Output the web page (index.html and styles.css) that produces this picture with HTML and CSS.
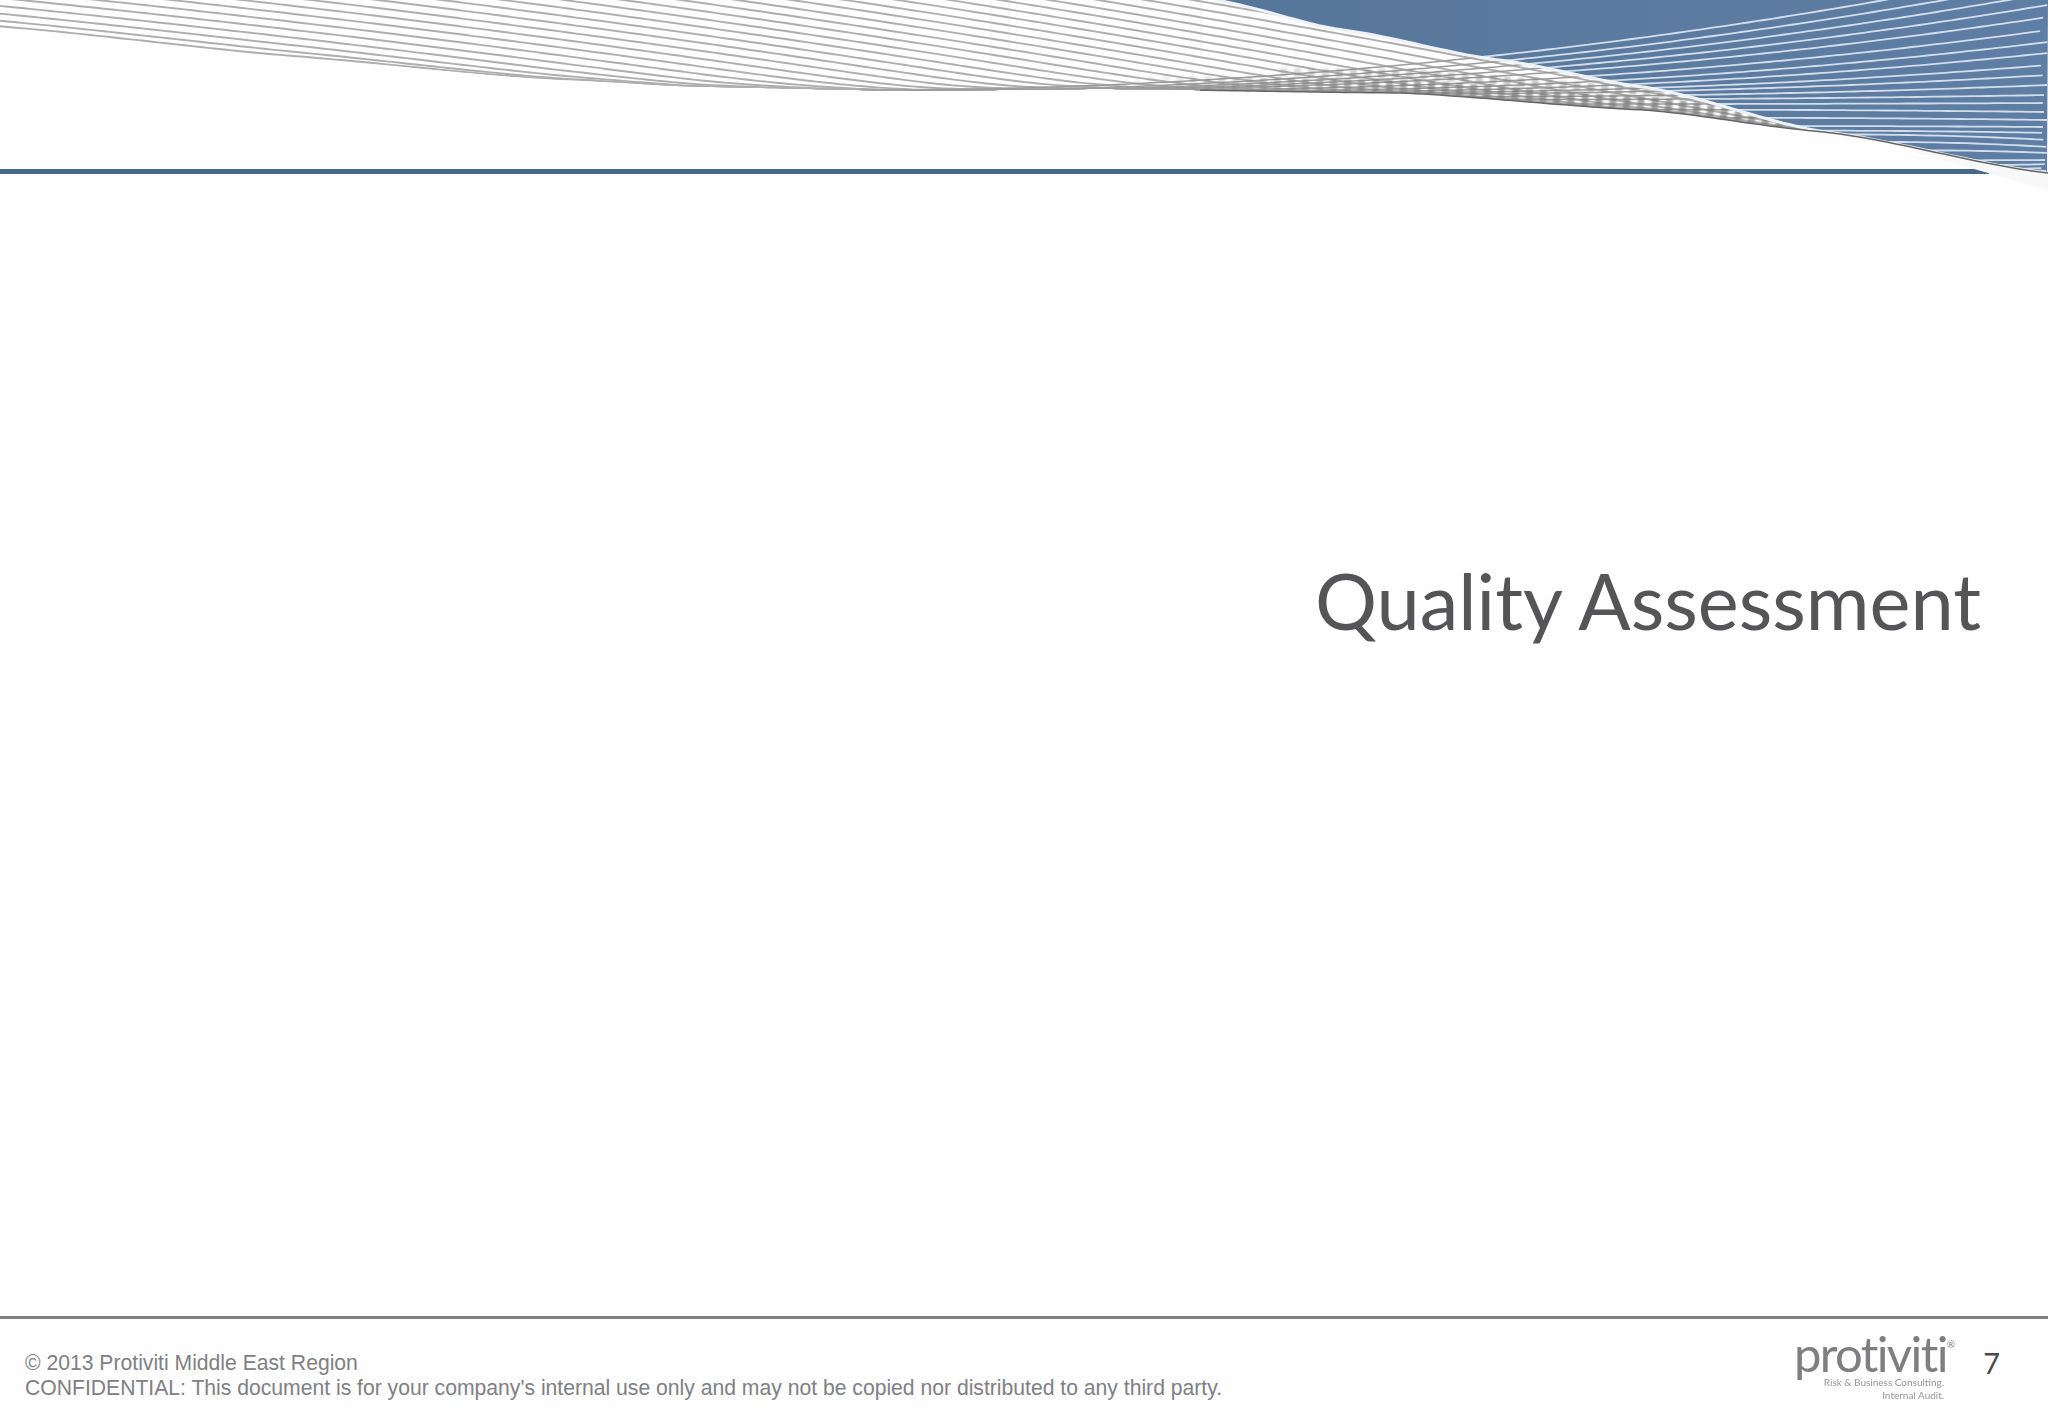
FILE: index.html
```html
<!DOCTYPE html>
<html lang="en">
<head>
    <meta charset="UTF-8" />
    <title>Quality Assessment</title>
    <link rel="stylesheet" href="styles.css">
</head>
<body>
    <div class="slide">
        <!-- wave artwork, lines are added by banner.js -->
        <svg class="banner" id="banner" width="2048" height="190" viewBox="0 0 2048 190" aria-hidden="true"></svg>

        <header class="top"><div class="top-rule"></div></header>

        <main class="content">
            <h1 class="title">Quality Assessment</h1>
        </main>

        <footer class="footer">
            <div class="legal">
                <div>© 2013 Protiviti Middle East Region</div>
                <div>CONFIDENTIAL: This document is for your company's internal use only and may not be copied nor distributed to any third party.</div>
            </div>
            <div class="brand">
                <div class="logo">
                    <div class="logo-name">protiviti<span class="logo-mark">®</span></div>
                    <div class="logo-tag">Risk &amp; Business Consulting.</div>
                    <div class="logo-tag">Internal Audit.</div>
                </div>
                <div class="page-number">7</div>
            </div>
        </footer>
    </div>
    <script src="banner.js"></script>
</body>
</html>
```

FILE: styles.css
```css
html, body {
    margin: 0;
    padding: 0;
    overflow: hidden;
    background: #fefefe;
}

.slide {
    position: relative;
    width: 2048px;
    height: 1418px;
    display: flex;
    flex-direction: column;
    font-family: "Liberation Sans", Arial, sans-serif;
}

/* Wave lies over the top of the slide */
.banner {
    position: absolute;
    top: 0;
    left: 0;
    display: block;
}

.top {
    height: 174px;
    display: flex;
    align-items: flex-end;
}

.top-rule {
    width: 1989px;
    height: 5px;
    background: #46698a;
}

.content {
    flex: 1;
    display: flex;
    justify-content: flex-end;
    padding: 382px 67px 0 0;
}

.title {
    margin: 0;
    font-family: Lato, sans-serif;
    font-weight: 400;
    font-size: 77.5px;
    line-height: 90px;
    color: #555558;
    white-space: nowrap;
    font-variant-ligatures: none;
}

.footer {
    height: 99px;
    border-top: 3px solid #808080;
    display: flex;
    justify-content: space-between;
    padding: 0 48px 0 25px;
}

.legal {
    padding-top: 31px;
    font-size: 21.15px;
    line-height: 25px;
    color: #808084;
}

.brand {
    display: flex;
    gap: 28px;
}

.logo {
    padding-top: 11px;
    text-align: right;
    color: #7f7f82;
}

.logo-name {
    font-family: Lato, sans-serif;
    font-size: 49px;
    line-height: 46px;
    letter-spacing: -1.6px;
    white-space: nowrap;
    font-variant-ligatures: none;
}

.logo-mark {
    font-size: 10px;
    line-height: 0;
    letter-spacing: 0;
    vertical-align: 24px;
}

.logo-tag {
    padding-right: 11px;
    font-family: Lato, sans-serif;
    font-size: 10px;
    line-height: 13px;
    color: #96969a;
    filter: blur(0.4px);
}

.page-number {
    padding-top: 26px;
    font-family: Lato, sans-serif;
    font-size: 29px;
    line-height: 36px;
    color: #4a4a4e;
}
```

FILE: banner.js
```js
// Draws the two line families of the header wave
const svg = document.getElementById("banner");
const NS = "http://www.w3.org/2000/svg";

// lower edge of the wave, read off the reference
const lowerEdge = [[0, 31], [280, 58], [561, 80], [701, 87], [912, 91], [1100, 89], [1402, 93], [1644, 110], [1825, 132], [2048, 173]];
// edge between the grey lines and the blue area
const upperEdge = [[1215, 0], [1342, 30], [1499, 60], [1644, 87], [1825, 132], [2048, 173]];
// where the rising lines meet the right side of the slide
const fanEnds = [-31, -19, -7, 5, 17, 30, 42, 53, 65, 75, 85, 95, 103, 112, 120, 127, 133, 140, 147, 153, 160, 164, 168, 171];
// where each of them leaves the lower edge, by its end value
const fanStarts = [[-31, 860], [95, 1500], [133, 1810], [171, 2030]];

function interp(points, x) {
    for (let i = 1; i < points.length; i++) {
        if (x <= points[i][0]) {
            const [x0, y0] = points[i - 1];
            const [x1, y1] = points[i];
            const t = (x - x0) / (x1 - x0);
            return y0 + (y1 - y0) * (t * t * (3 - 2 * t) * 0.35 + t * 0.65);
        }
    }
    return points[points.length - 1][1];
}

function softMin(a, b, t) {
    const m = Math.min(a, b);
    return m - t * Math.log(Math.exp((m - a) / t) + Math.exp((m - b) / t));
}

function el(name, attrs, parent) {
    const node = document.createElementNS(NS, name);
    for (const key in attrs) node.setAttribute(key, attrs[key]);
    (parent || svg).appendChild(node);
    return node;
}

function toPath(points) {
    return "M" + points.map(p => p[0].toFixed(1) + " " + p[1].toFixed(1)).join("L");
}

function sample(fn, from, to, step) {
    const out = [];
    for (let x = from; x <= to; x += step) out.push([x, fn(x)]);
    return out;
}

const lowerLine = sample(x => interp(lowerEdge, x), 0, 2048, 8);
const upperLine = sample(x => interp(upperEdge, x), 1215, 2048, 8);

const defs = el("defs", {});
const blueClip = el("clipPath", { id: "blue-clip" }, defs);
el("path", { d: toPath(upperLine) + "L2048 0Z" }, blueClip);
const waveClip = el("clipPath", { id: "wave-clip" }, defs);
el("path", { d: "M0 0L1215 0L" + toPath(upperLine).slice(1) + "L" + toPath(lowerLine.slice().reverse()).slice(1) + "Z" }, waveClip);

const blueFill = el("linearGradient", { id: "blue-fill", x1: 0, y1: 0, x2: 1, y2: 0 }, defs);
el("stop", { offset: 0, "stop-color": "#567699" }, blueFill);
el("stop", { offset: 1, "stop-color": "#5f7ea5" }, blueFill);

// dotted band fades in from the left
const bandFill = el("linearGradient", { id: "band-fill", gradientUnits: "userSpaceOnUse", x1: 1120, y1: 0, x2: 1860, y2: 0 }, defs);
el("stop", { offset: 0, "stop-color": "#777", "stop-opacity": 0 }, bandFill);
el("stop", { offset: 0.35, "stop-color": "#777", "stop-opacity": 0.6 }, bandFill);
el("stop", { offset: 1, "stop-color": "#777", "stop-opacity": 0.7 }, bandFill);
const soft = el("filter", { id: "soft", x: "-5%", y: "-50%", width: "110%", height: "200%" }, defs);
el("feGaussianBlur", { stdDeviation: 0.8 }, soft);

// faint shadow under the tail of the wave
el("path", { d: "M1900 148L2048 173L2048 190Z", fill: "#f8f8f8" });
el("path", { d: toPath(upperLine) + "L2048 0Z", fill: "url(#blue-fill)" });

// grey lines running down to the right
const greyGroup = el("g", { "clip-path": "url(#wave-clip)", fill: "none", stroke: "#aeaeae", "stroke-width": 1.9 });
const slope = x => 0.1 * x + 0.00003 * x * x;
for (let a = 30; a > -190; a -= 8) {
    const line = sample(x => softMin(a + slope(x), interp(lowerEdge, x), 6), 0, 1900, 8);
    el("path", { d: toPath(line) }, greyGroup);
}

// fan of lines rising to the right, white on the blue area
const fanGrey = el("g", { "clip-path": "url(#wave-clip)", fill: "none", stroke: "#9c9c9c", "stroke-width": 1.5 });
const fanWhite = el("g", { "clip-path": "url(#blue-clip)", fill: "none", stroke: "#d3deea", "stroke-width": 1.8 });
fanEnds.forEach(end => {
    const startX = interp(fanStarts, end);
    const startY = interp(lowerEdge, startX);
    const c = (startY - end) / Math.pow(2048 - startX, 2);
    const d = toPath(sample(x => startY - c * (x - startX) * (x - startX), startX, 2048, 8));
    el("path", { d: d }, fanGrey);
    el("path", { d: d }, fanWhite);
});

// dotted band where the two families cross
const bands = el("g", { "clip-path": "url(#wave-clip)" });
const offsetRow = (from, to, dy) => lowerLine.filter(p => p[0] >= from && p[0] <= to).map(p => [p[0], p[1] - dy]);
const softRow = el("g", { filter: "url(#soft)", fill: "none", "stroke-dasharray": "7 7", stroke: "url(#band-fill)" }, bands);
el("path", { d: toPath(offsetRow(1120, 1860, 7)), "stroke-width": 13 }, softRow);
el("path", { d: toPath(offsetRow(1280, 1680, 19)), "stroke-width": 9, opacity: 0.6 }, softRow);

// pale band along the blue edge and dark line along the lower edge
el("path", { d: toPath(upperLine), fill: "none", stroke: "#eef3f7", "stroke-width": 3 });
el("path", { d: toPath(lowerLine.filter(p => p[0] >= 1200)), fill: "none", stroke: "#666", "stroke-width": 1.5 });
```
